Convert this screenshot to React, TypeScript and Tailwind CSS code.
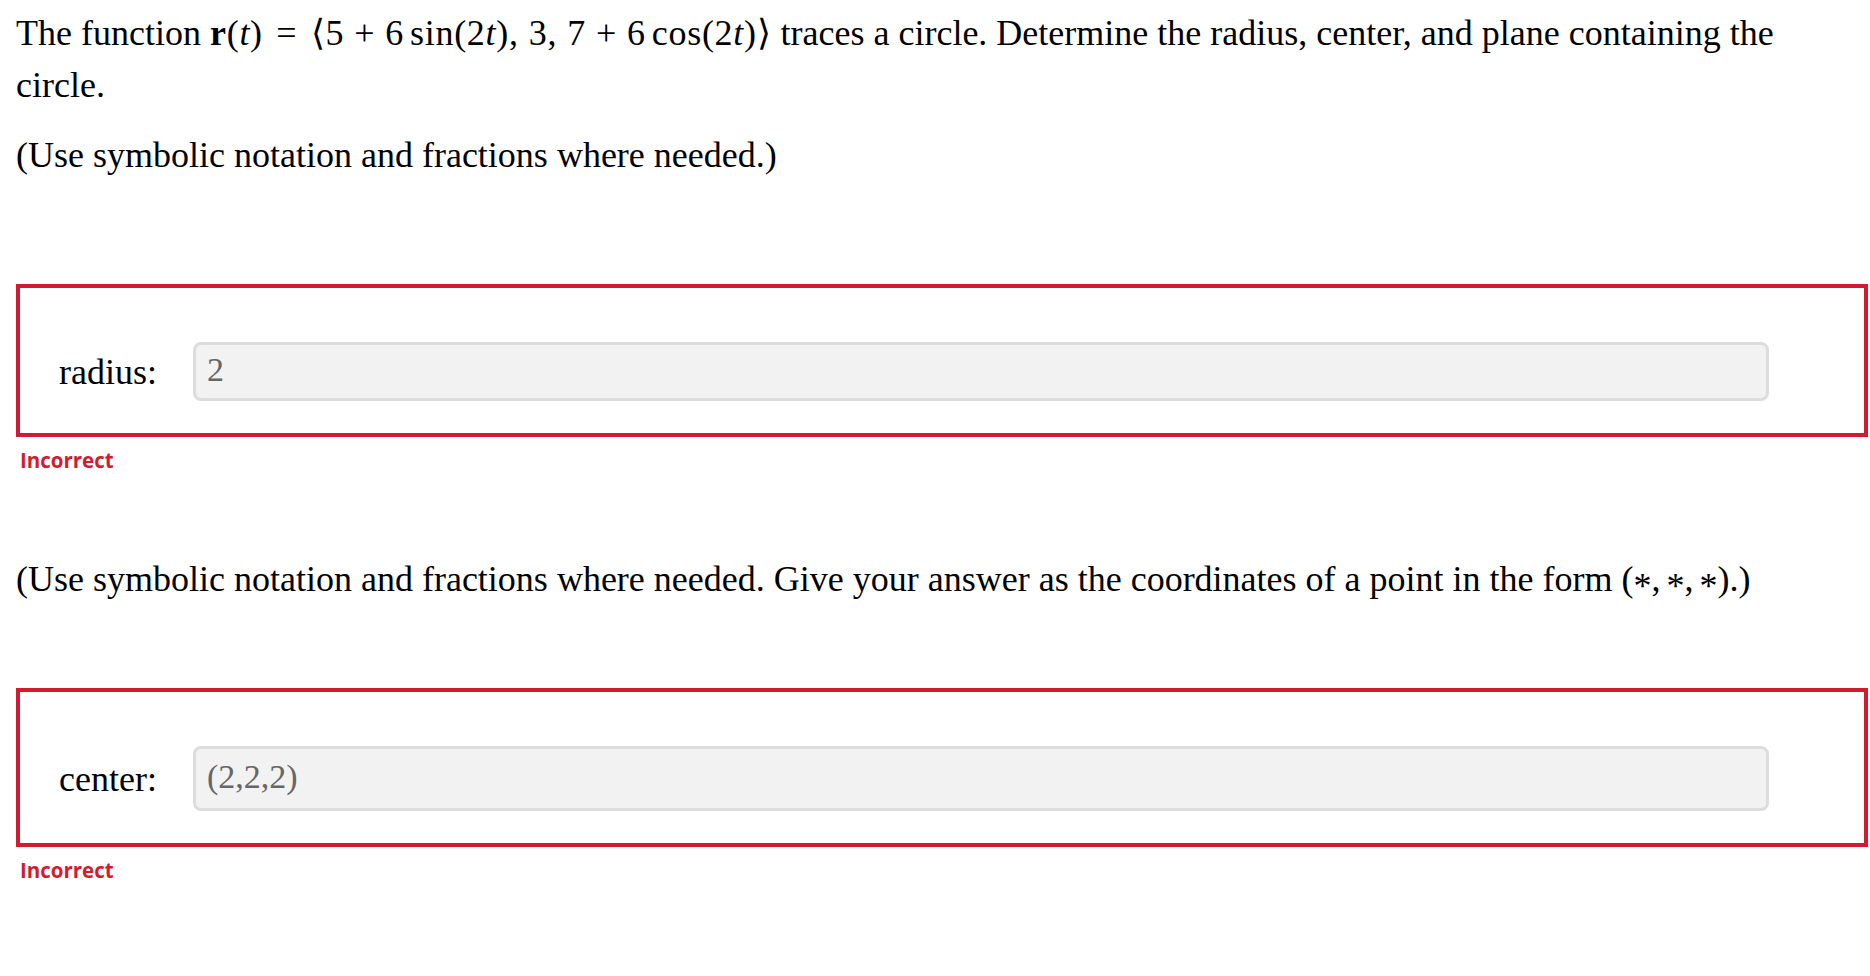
import React from "react";

const serif = "font-['Liberation_Serif','Times_New_Roman',serif]";

function Box({ label, value, inputH, top }: { label: string; value: string; inputH: string; top: string }) {
  return (
    <div className={`${top} border-4 border-[#d31b2f] pt-[54px] pb-[32px] pl-[39px] flex items-center`}>
      <div className="w-[134px] text-[36px] leading-[54px] text-black">{label}</div>
      <div
        className={`w-[1576px] ${inputH} rounded-[8px] border-[3px] border-[#dddddd] bg-[#f2f2f2] pl-[11px] pb-[4px] flex items-center`}
      >
        <span className="text-[34px] leading-[40px] text-[#666666]">{value}</span>
      </div>
    </div>
  );
}

function Incorrect() {
  return (
    <div className="mt-[8px] pl-[4px] font-['Open_Sans',sans-serif] text-[20.5px] leading-[30px] font-bold text-[#d31b2f]">
      Incorrect
    </div>
  );
}

function Op({ c, m }: { c: string; m: string }) {
  return <span className={`inline-block w-[0.778em] text-center ${m}`}>{c}</span>;
}

function Star() {
  return <span className="inline-block w-[0.5em] text-center translate-y-[0.2em]">*</span>;
}

export default function App() {
  return (
    <div className={`min-h-screen bg-white text-black ${serif}`}>
      <div className="pl-[16px] pr-[2px] pt-[7px] pb-[60px]">
        <p className="text-[36px] leading-[52px]">
          The function{" "}
          <span className="tracking-[0.02em]">
            <span className="font-bold">r</span>(<i>t</i>)
            <Op c="=" m="mx-[0.278em]" />
            ⟨5<Op c="+" m="mx-[0.18em]" />6<span className="ml-[0.1667em]">sin</span>(2<i>t</i>),
            <span className="ml-[0.28em]">3,</span>
            <span className="ml-[0.28em]">7</span>
            <Op c="+" m="mx-[0.18em]" />6<span className="ml-[0.1667em]">cos</span>(2<i>t</i>)⟩
          </span>{" "}
          traces a circle. Determine the radius, center, and plane containing the
          <br />
          circle.
        </p>
        <p className="mt-[17px] text-[36px] leading-[54px]">(Use symbolic notation and fractions where needed.)</p>

        <Box label="radius:" value="2" inputH="h-[59px]" top="mt-[102px]" />
        <Incorrect />

        <p className="mt-[77px] text-[36px] leading-[54px]">
          (Use symbolic notation and fractions where needed. Give your answer as the coordinates of a point in the form (
          <Star />,<span className="ml-[0.1667em]" />
          <Star />,<span className="ml-[0.1667em]" />
          <Star />).)
        </p>

        <Box label="center:" value="(2,2,2)" inputH="h-[65px]" top="mt-[82px]" />
        <Incorrect />
      </div>
    </div>
  );
}
